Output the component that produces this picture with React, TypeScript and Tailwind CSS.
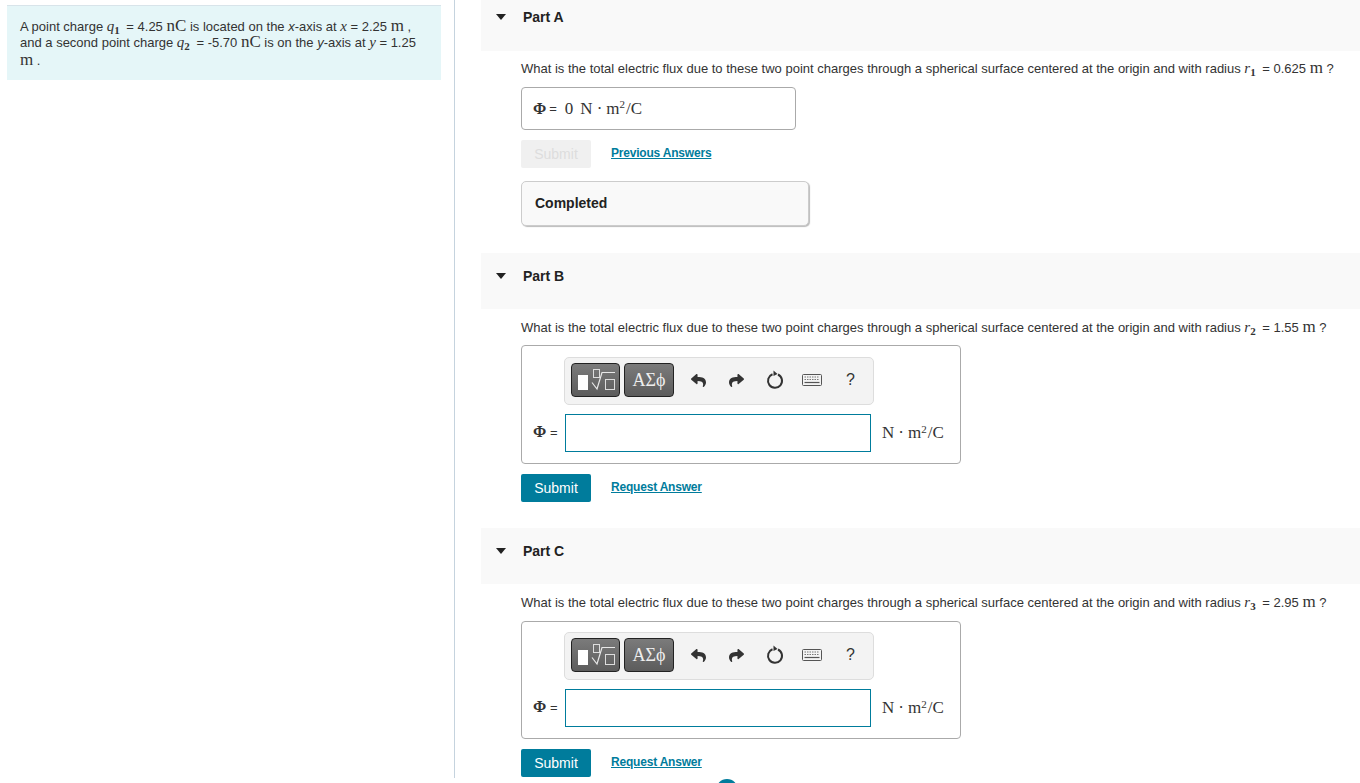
import { ReactNode } from 'react'
import { FaReply, FaShare } from 'react-icons/fa'

const sans = "font-['Liberation_Sans',Arial,sans-serif]"

const M = ({ children }: { children: ReactNode }) => (
    <span className="font-['Liberation_Serif',serif] text-[17px] leading-none">{children}</span>
)

const V = ({ name, sub }: { name: string; sub?: string }) => (
    <span className="font-['Liberation_Serif',serif] text-[15px] leading-none italic">
        {name}
        {sub && <sub className="not-italic text-[11px] leading-none font-bold mr-[3px]">{sub}</sub>}
    </span>
)

const Unit = ({ className }: { className: string }) => (
    <span className={`font-['Liberation_Serif',serif] whitespace-nowrap text-[#333] ${className}`}>
        N<span className="mx-[4px]">·</span>m<sup className="text-[11px] leading-none">2</sup>
        <span className="ml-[1px]">/C</span>
    </span>
)

const Caret = () => (
    <svg width="10" height="6" viewBox="0 0 10 6" className="shrink-0">
        <path d="M0 0h10L5 6z" fill="#222" />
    </svg>
)

const PartHeader = ({ label, className }: { label: string; className: string }) => (
    <div className={`bg-[#f9f9f9] flex items-start pl-[15px] gap-[17px] ${className}`}>
        <div className="pt-[3px]">
            <Caret />
        </div>
        <span className="text-[14px] leading-[13px] font-bold text-[#222]">{label}</span>
    </div>
)

const RadicalIcon = () => (
    <svg width="47" height="32" viewBox="1 1 47 32">
        <rect x="7" y="12" width="10" height="15" fill="#fff" />
        <rect x="22.5" y="6.5" width="6" height="8" fill="none" stroke="#ddd" strokeWidth="1" />
        <path d="M21 19.5l5 6.5 5-16.5h13" fill="none" stroke="#e8e8e8" strokeWidth="1.2" />
        <rect x="34.5" y="16.5" width="9" height="10" fill="none" stroke="#ddd" strokeWidth="1" />
    </svg>
)

const KeyboardIcon = () => (
    <svg width="20" height="12" viewBox="0 0 20 12">
        <rect x="0.5" y="0.5" width="19" height="11" rx="1" fill="#f3f3f3" stroke="#555" />
        <path d="M2.5 3h15M2.5 5.5h15" stroke="#777" strokeWidth="1.2" strokeDasharray="1.5 1" />
        <path d="M2.5 8.5h15" stroke="#555" strokeWidth="1.2" />
    </svg>
)

const RefreshIcon = () => (
    <svg width="18" height="20" viewBox="0 0 18 20">
        <path d="M6.5 4.3a7 7 0 1 0 5.5 .2" fill="none" stroke="#333" strokeWidth="2" />
        <path d="M7.5 0.5l4 3.6-4 1.8z" fill="#333" />
    </svg>
)

const ToolButton = ({ children, className }: { children: ReactNode; className: string }) => (
    <div
        className={`h-[34px] rounded-[4px] border border-[#222] bg-gradient-to-b from-[#7b7b7b] to-[#5c5c5c] flex items-center justify-center ${className}`}
    >
        {children}
    </div>
)

const Toolbar = () => (
    <div className="ml-[42px] w-[310px] h-[48px] rounded-[5px] border border-[#ddd] bg-[#f3f3f3] flex items-center pl-[6px] pb-[2px]">
        <ToolButton className="w-[49px]">
            <RadicalIcon />
        </ToolButton>
        <ToolButton className="w-[50px] ml-[4px]">
            <span className="font-['Liberation_Serif',serif] text-[18px] text-[#eee]">ΑΣϕ</span>
        </ToolButton>
        <FaReply className="ml-[17px] text-[#333]" size={15} />
        <FaShare className="ml-[23px] text-[#333]" size={15} />
        <div className="ml-[22px]">
            <RefreshIcon />
        </div>
        <div className="ml-[18px]">
            <KeyboardIcon />
        </div>
        <span className="ml-[24px] text-[16px] text-[#333]">?</span>
    </div>
)

const AnswerBox = ({ boxClass }: { boxClass: string }) => (
    <div className={`w-[440px] rounded-[4px] border border-[#aaa] ${boxClass}`}>
        <Toolbar />
        <div className="flex items-center mt-[9px]">
            <span className="w-[43px] pl-[11px] pb-[2px] text-[13px] text-[#333] whitespace-nowrap">
                <span className="font-['Liberation_Serif',serif] text-[16px] font-bold">Φ</span> =
            </span>
            <div className="w-[306px] h-[38px] border border-[#007c9c] bg-white" />
            <Unit className="ml-[11px] text-[17px]" />
        </div>
    </div>
)

const Question = ({ name, sub, value }: { name: string; sub: string; value: string }) => (
    <p className="text-[13px] leading-[18px] text-[#333] whitespace-nowrap">
        What is the total electric flux due to these two point charges through a spherical surface centered at
        the origin and with radius <V name={name} sub={sub} /> = {value} <M>m</M> ?
    </p>
)

const SubmitRow = ({ link, disabled }: { link: string; disabled?: boolean }) => (
    <div className="flex items-center">
        <div
            className={`w-[70px] h-[28px] rounded-[2px] flex items-center justify-center text-[14px] ${
                disabled ? 'bg-[#f0f0f0] text-[#ddd]' : 'bg-[#007c9c] text-white'
            }`}
        >
            Submit
        </div>
        <a className="ml-[20px] -mt-[2px] text-[12px] tracking-[-0.2px] font-bold text-[#007c9c] underline">{link}</a>
    </div>
)

export default function App() {
    return (
        <div className={`relative h-[783px] w-[1360px] overflow-hidden bg-white flex items-start ${sans}`}>
            <div className="w-[455px] h-[778px] shrink-0 border-r border-[#c5d3de] pt-[5px] pl-[7px]">
                <div className="w-[434px] h-[75px] bg-[#e5f6f8] border-t border-[#d8e4ea] pt-[11px] pl-[13px] text-[13px] leading-[17px] text-[#333]">
                    <p className="h-[16px] whitespace-nowrap">
                        A point charge <V name="q" sub="1" /> = 4.25 <M>nC</M> is located on the <i>x</i>-axis at{' '}
                        <V name="x" /> = 2.25 <M>m</M> ,
                    </p>
                    <p className="h-[18px] whitespace-nowrap">
                        and a second point charge <V name="q" sub="2" /> = -5.70 <M>nC</M> is on the <i>y</i>-axis at{' '}
                        <V name="y" /> = 1.25
                    </p>
                    <p className="h-[17px]">
                        <M>m</M> .
                    </p>
                </div>
            </div>

            <div className="ml-[26px] flex-1">
                <PartHeader label="Part A" className="h-[51px] pt-[11px]" />
                <div className="pl-[40px]">
                    <div className="mt-[8px]">
                        <Question name="r" sub="1" value="0.625" />
                    </div>
                    <div className="mt-[9px] w-[275px] h-[43px] rounded-[4px] border border-[#aaa] flex items-center pl-[11px] text-[#333]">
                        <span className="font-['Liberation_Serif',serif] text-[16px] font-bold">Φ</span>
                        <span className="ml-[3px] text-[13px]">=</span>
                        <span className="ml-[8px] font-['Liberation_Serif',serif] text-[17px]">0</span>
                        <Unit className="ml-[7px] text-[17px]" />
                    </div>
                    <div className="mt-[10px]">
                        <SubmitRow link="Previous Answers" disabled />
                    </div>
                    <div className="mt-[13px] w-[288px] h-[45px] rounded-[5px] border border-[#ccc] bg-[#f9f9f9] shadow-[1px_1px_1px_#bbb] flex items-center pl-[13px] pb-[2px] text-[14px] leading-[14px] font-bold text-[#222]">
                        Completed
                    </div>
                </div>

                <PartHeader label="Part B" className="mt-[27px] h-[56px] pt-[17px]" />
                <div className="pl-[40px]">
                    <div className="mt-[9px]">
                        <Question name="r" sub="2" value="1.55" />
                    </div>
                    <div className="mt-[8px]">
                        <AnswerBox boxClass="h-[119px] pt-[11px]" />
                    </div>
                    <div className="mt-[10px]">
                        <SubmitRow link="Request Answer" />
                    </div>
                </div>

                <PartHeader label="Part C" className="mt-[26px] h-[56px] pt-[17px]" />
                <div className="pl-[40px]">
                    <div className="mt-[9px]">
                        <Question name="r" sub="3" value="2.95" />
                    </div>
                    <div className="mt-[9px]">
                        <AnswerBox boxClass="h-[118px] pt-[10px]" />
                    </div>
                    <div className="mt-[10px]">
                        <SubmitRow link="Request Answer" />
                    </div>
                </div>
            </div>

            <div className="absolute left-[716px] top-[779px] w-[22px] h-[22px] rounded-full bg-[#007c9c]" />
        </div>
    )
}
